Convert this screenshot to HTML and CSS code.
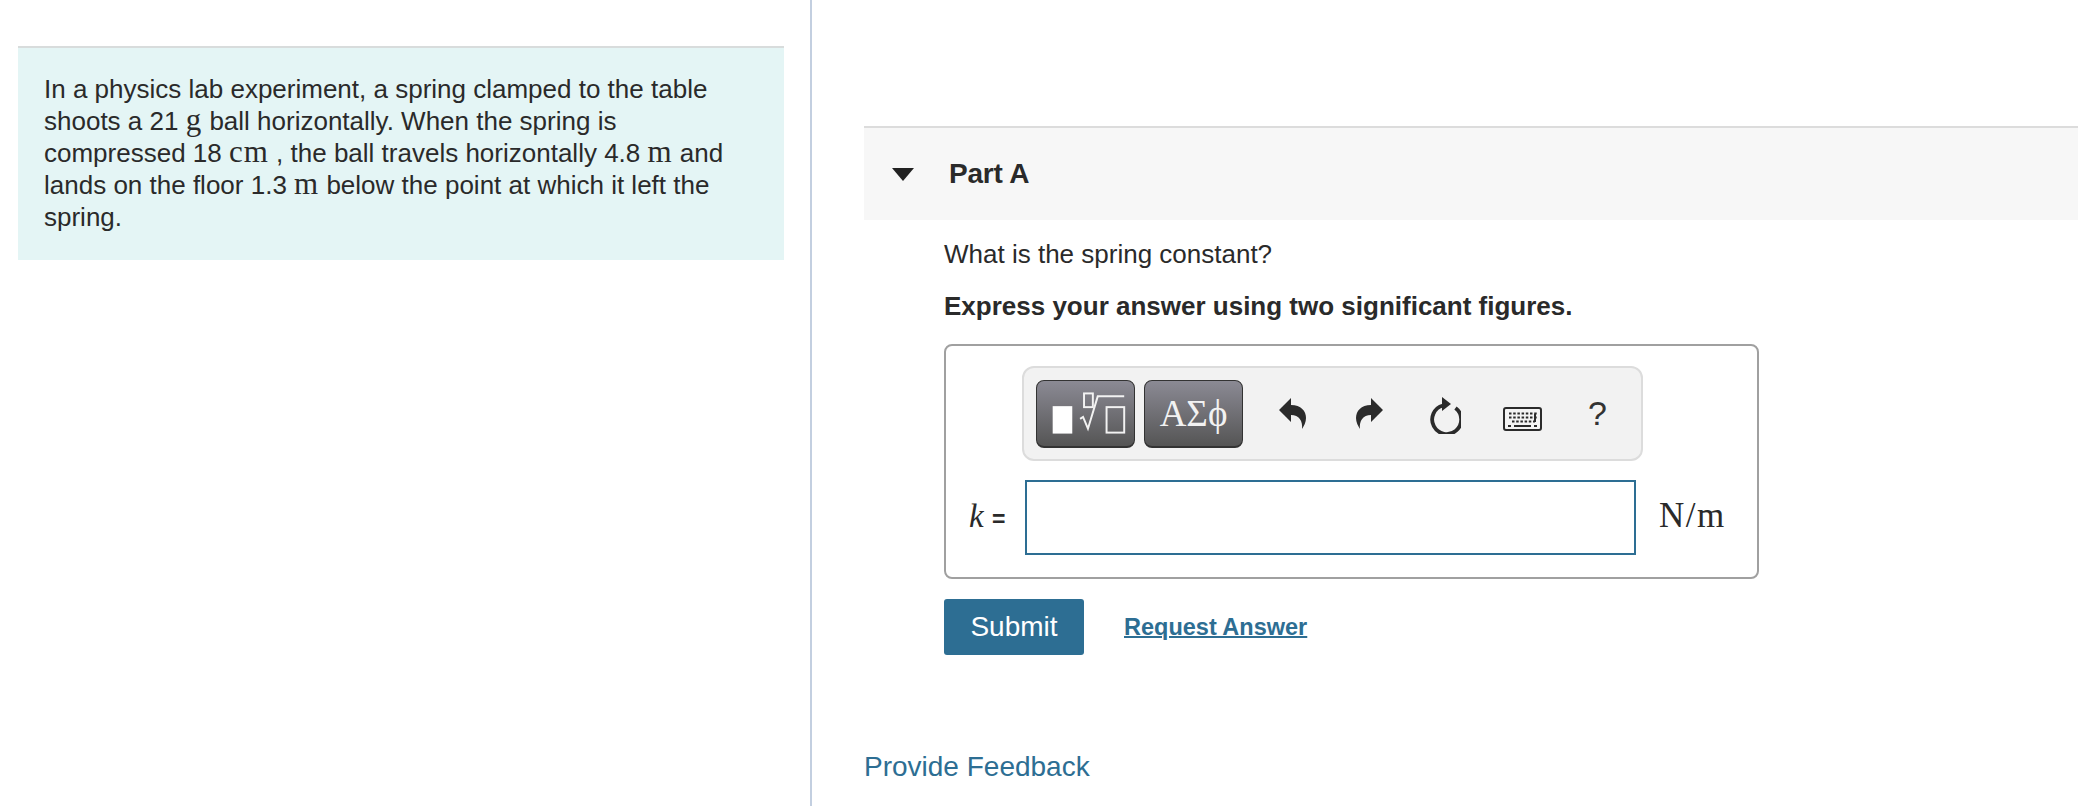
FILE: index.html
```html
<!DOCTYPE html>
<html lang="en">
<head>
<meta charset="utf-8">
<title>Part A</title>
<link rel="stylesheet" href="styles.css">
</head>
<body>
<div class="page">
  <aside class="left">
    <div class="intro">
      <p>In a physics lab experiment, a spring clamped to the table shoots a 21 <span class="m">g</span> ball horizontally. When the spring is compressed 18 <span class="m">cm</span> , the ball travels horizontally 4.8 <span class="m">m</span> and lands on the floor 1.3 <span class="m">m</span> below the point at which it left the spring.</p>
    </div>
  </aside>
  <main class="right">
    <header class="part-head">
      <svg class="caret" width="22" height="13" viewBox="0 0 22 13"><path d="M0 0H22L11 13Z" fill="#222"/></svg>
      <h2>Part A</h2>
    </header>
    <section class="part-body">
      <p class="question">What is the spring constant?</p>
      <p class="instruction">Express your answer using two significant figures.</p>
      <div class="answer">
        <div class="toolbar">
          <button class="tool" type="button" aria-label="templates">
            <svg width="99" height="67" viewBox="0 0 99 67">
              <rect x="16" y="26" width="20" height="28" fill="#fff"/>
              <g fill="none" stroke="#f2f2f2" stroke-width="2">
                <rect x="48" y="13" width="9" height="14"/>
                <rect x="71" y="27" width="18" height="26"/>
                <path d="M44 39l3-2 5 12L62 16H89"/>
              </g>
            </svg>
          </button>
          <button class="tool greek" type="button">ΑΣϕ</button>
          <span class="icon-row">
            <svg class="ic undo" width="27" height="31" viewBox="0 0 27 31"><path d="M0 12 12 0v7c10 0 15 6 15 13 0 4-2 8-4 11 1-8-3-14-11-14v7Z" fill="#2b2b2b"/></svg>
            <svg class="ic redo" width="27" height="31" viewBox="0 0 27 31"><path d="M27 12 15 0v7C5 7 0 13 0 20c0 4 2 8 4 11-1-8 3-14 11-14v7Z" fill="#2b2b2b"/></svg>
            <svg class="ic reload" width="33" height="37" viewBox="0 0 33 37"><path d="M15 8.500A14.500 14.500 0 1 0 27.500 11" fill="none" stroke="#2b2b2b" stroke-width="3.800"/><path d="M14 0l9 7-9 7Z" fill="#2b2b2b"/></svg>
            <svg class="ic kbd" width="39" height="24" viewBox="0 0 39 24"><rect x="1" y="1" width="37" height="22" rx="2" fill="#f4f4f4" stroke="#2b2b2b" stroke-width="2"/><path d="M6 6.500h28M6 10.500h28M9 14.500h23" stroke="#2b2b2b" stroke-width="2" stroke-dasharray="2.500 1.700" fill="none"/><path d="M5 19h3M11 19h17M31 19h3M32 7v8" stroke="#2b2b2b" stroke-width="2" fill="none"/></svg>
            <span class="help">?</span>
          </span>
        </div>
        <div class="entry">
          <span class="label"><i>k</i> <span class="eq">=</span></span>
          <input class="field" type="text" aria-label="k">
          <span class="unit">N/m</span>
        </div>
      </div>
      <div class="actions">
        <button class="submit" type="button">Submit</button>
        <a class="request" href="#">Request Answer</a>
      </div>
    </section>
    <a class="feedback" href="#">Provide Feedback</a>
  </main>
</div>
</body>
</html>
```
FILE: styles.css
```css
* { box-sizing: border-box; }
html, body { margin: 0; height: 100%; background: #fff; overflow: hidden; }
body { font-family: "Liberation Sans", Arial, sans-serif; color: #2a2a2a; }
p { margin: 0; }
.page { display: flex; height: 806px; }

.left { width: 812px; flex: none; padding: 46px 26px 0 18px; border-right: 2px solid #c3cfe0; }
.intro { height: 214px; background: #e4f5f5; border-top: 2px solid #d8dcdc; padding: 25px 26px 0; font-size: 26px; line-height: 32px; }
.m { font-family: "Liberation Serif", serif; font-size: 31px; line-height: 0; letter-spacing: 1px; }

.right { flex: 1; padding: 126px 0 0 52px; display: flex; flex-direction: column; min-width: 0; }
.part-head { height: 94px; background: #f7f7f7; border-top: 2px solid #dcdcdc; display: flex; align-items: center; padding-left: 28px; gap: 35px; }
.part-head h2 { margin: 0; font-size: 28px; font-weight: 700; line-height: 30px; letter-spacing: -.2px; }
.part-body { padding: 18px 0 0 80px; width: 895px; }
.question { font-size: 26px; line-height: 32px; }
.instruction { font-size: 26px; line-height: 32px; font-weight: 700; margin-top: 20px; }

.answer { margin-top: 22px; width: 815px; height: 235px; border: 2px solid #a0a0a0; border-radius: 8px; padding: 20px 11px 0 15px; }
.toolbar { margin-left: 61px; width: 621px; height: 95px; background: #f2f2f2; border: 2px solid #dcdcdc; border-radius: 12px; display: flex; align-items: center; padding: 0 0 0 12px; gap: 9px; }
.tool { width: 99px; height: 68px; padding: 0; border: 1px solid #333; border-bottom-width: 2px; border-radius: 8px; background: linear-gradient(#8b8a94, #555); display: flex; align-items: center; justify-content: center; color: #f2f2f2; font-family: "Liberation Serif", serif; font-size: 37px; }
.icon-row { display: flex; align-items: center; margin-left: 27px; }
.ic { display: block; }
.redo { margin-left: 50px; }
.reload { margin-left: 45px; margin-top: 4px; }
.kbd { margin-left: 42px; margin-top: 10px; }
.help { margin-left: 46px; font-size: 34px; color: #333; }

.entry { display: flex; align-items: center; margin-top: 19px; height: 75px; }
.label { width: 64px; padding: 0 0 3px 8px; font-family: "Liberation Serif", serif; font-size: 33px; white-space: nowrap; }
.label .eq { font-family: "Liberation Sans", sans-serif; font-size: 23px; font-weight: 700; }
.field { width: 611px; height: 75px; margin: 0; border: 2px solid #2d6e93; background: #fff; outline: none; }
.unit { margin-left: 23px; padding-bottom: 4px; font-family: "Liberation Serif", serif; font-size: 35px; letter-spacing: 1.500px; white-space: nowrap; }

.actions { display: flex; align-items: center; margin-top: 20px; gap: 40px; }
.submit { width: 140px; height: 56px; padding: 0; border: 0; border-radius: 3px; background: #2d6e93; color: #fff; font-family: "Liberation Sans", sans-serif; font-size: 28px; }
.request { color: #2d6e93; font-size: 23.500px; font-weight: 700; text-decoration-thickness: 2px; }
.feedback { margin-top: 95px; color: #2d6e93; font-size: 28px; line-height: 34px; text-decoration: none; align-self: flex-start; }
```
